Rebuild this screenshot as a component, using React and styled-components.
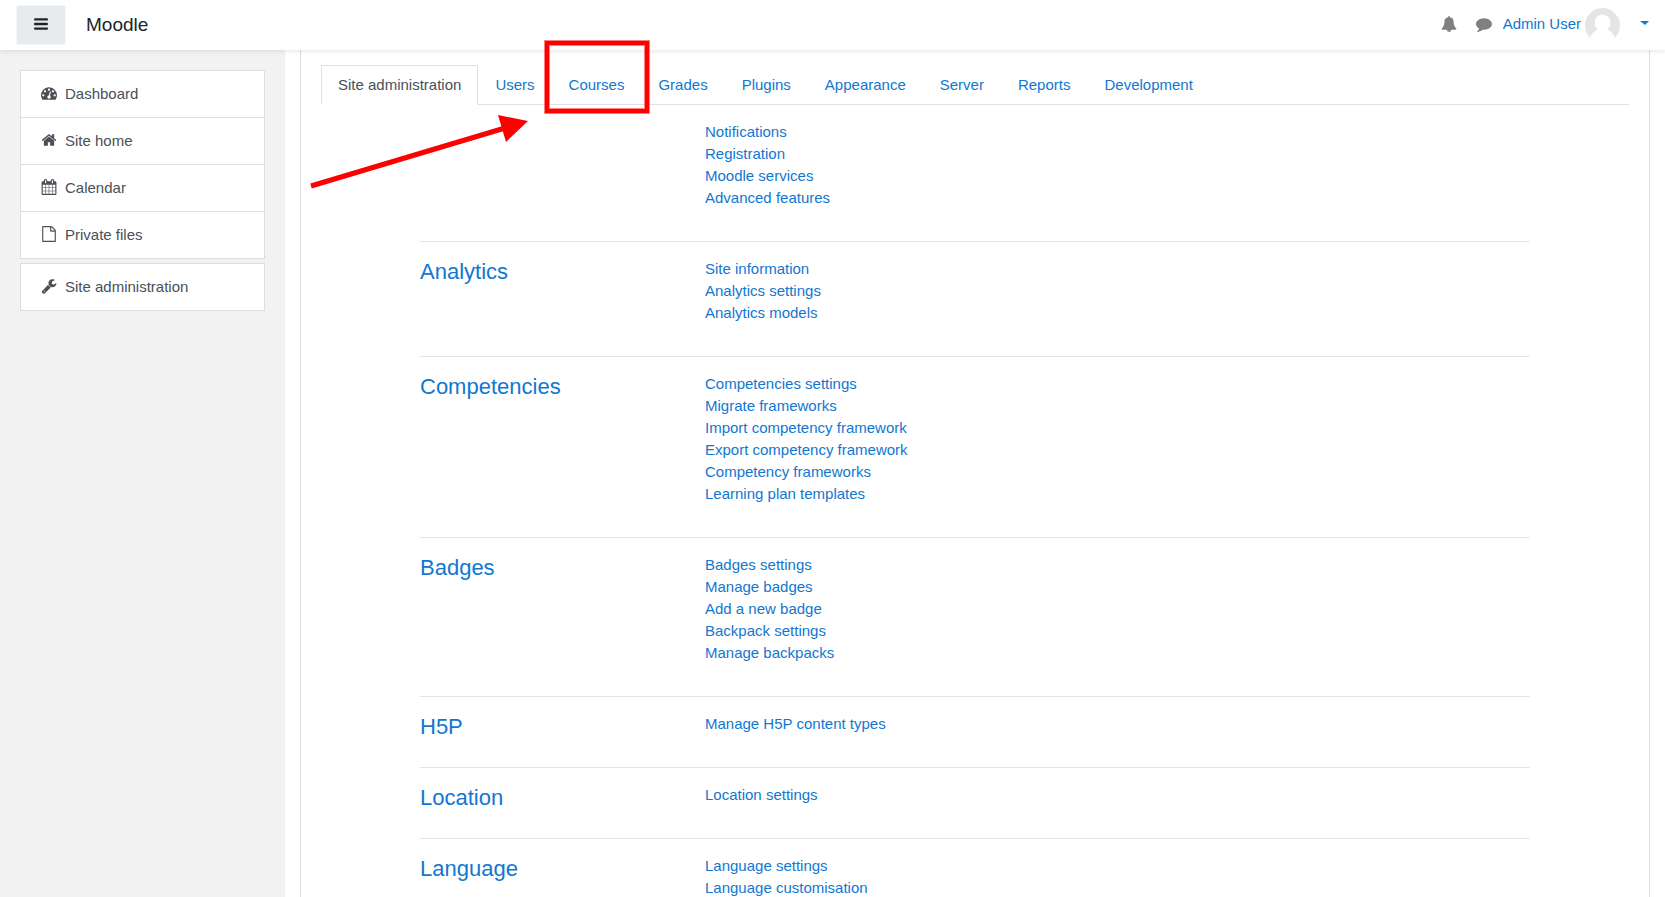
import React from 'react';
import styled, { createGlobalStyle, css } from 'styled-components';

const GlobalStyle = createGlobalStyle`
  *, *::before, *::after { box-sizing: border-box; }
  body {
    margin: 0;
    background: #fff;
    color: #212529;
    font-family: "Liberation Sans", Arial, sans-serif;
    font-size: 15px;
    line-height: 22px;
  }
  a { color: #1177d1; text-decoration: none; }
  ul { list-style: none; margin: 0; padding: 0; }
`;

/* Font Awesome 4 glyph outlines on a 1792 grid */
const icons = {
  bars: 'M1664 1344v128q0 26-19 45t-45 19h-1408q-26 0-45-19t-19-45v-128q0-26 19-45t45-19h1408q26 0 45 19t19 45zm0-512v128q0 26-19 45t-45 19h-1408q-26 0-45-19t-19-45v-128q0-26 19-45t45-19h1408q26 0 45 19t19 45zm0-512v128q0 26-19 45t-45 19h-1408q-26 0-45-19t-19-45v-128q0-26 19-45t45-19h1408q26 0 45 19t19 45z',
  home: 'M1472 992v480q0 26-19 45t-45 19h-384v-384h-256v384h-384q-26 0-45-19t-19-45v-480q0-1 .5-3t.5-3l575-474 575 474q1 2 1 6zm223-69l-62 74q-8 9-21 11h-3q-13 0-21-7l-692-577-692 577q-12 8-24 7-13-2-21-11l-62-74q-8-10-7-23.5t11-21.5l719-599q32-26 76-26t76 26l244 204v-195q0-14 9-23t23-9h192q14 0 23 9t9 23v408l219 182q10 8 11 21.5t-7 23.5z',
  dashboard: 'M384 1152q0-53-37.5-90.5t-90.5-37.5-90.5 37.5-37.5 90.5 37.5 90.5 90.5 37.5 90.5-37.5 37.5-90.5zm192-448q0-53-37.5-90.5t-90.5-37.5-90.5 37.5-37.5 90.5 37.5 90.5 90.5 37.5 90.5-37.5 37.5-90.5zm428 481l101-382q6-26-7.5-48.5t-38.5-29.5-48 6.5-30 39.5l-101 382q-60 5-107 43.5t-63 98.5q-20 77 20 146t117 89 146-20 89-117q16-60-6-117t-72-91zm660-33q0-53-37.5-90.5t-90.5-37.5-90.5 37.5-37.5 90.5 37.5 90.5 90.5 37.5 90.5-37.5 37.5-90.5zm-640-640q0-53-37.5-90.5t-90.5-37.5-90.5 37.5-37.5 90.5 37.5 90.5 90.5 37.5 90.5-37.5 37.5-90.5zm448 192q0-53-37.5-90.5t-90.5-37.5-90.5 37.5-37.5 90.5 37.5 90.5 90.5 37.5 90.5-37.5 37.5-90.5zm320 448q0 261-141 483-19 29-54 29h-1402q-35 0-54-29-141-221-141-483 0-182 71-348t191-286 286-191 348-71 348 71 286 191 191 286 71 348z',
  calendar: 'M192 1664h288v-288h-288v288zm352 0h320v-288h-320v288zm-352-352h288v-320h-288v320zm352 0h320v-320h-320v320zm-352-384h288v-288h-288v288zm736 736h320v-288h-320v288zm-384-736h320v-288h-320v288zm768 736h288v-288h-288v288zm-384-352h320v-320h-320v320zm-352-864v-288q0-13-9.500-22.500t-22.500-9.500h-64q-13 0-22.500 9.500t-9.500 22.500v288q0 13 9.500 22.500t22.500 9.500h64q13 0 22.500-9.500t9.500-22.500zm736 864h288v-320h-288v320zm-384-384h320v-288h-320v288zm384 0h288v-288h-288v288zm32-480v-288q0-13-9.500-22.500t-22.500-9.500h-64q-13 0-22.500 9.500t-9.500 22.500v288q0 13 9.500 22.500t22.500 9.500h64q13 0 22.500-9.500t9.500-22.500zm384-64v1280q0 52-38 90t-90 38h-1408q-52 0-90-38t-38-90v-1280q0-52 38-90t90-38h128v-96q0-66 47-113t113-47h64q66 0 113 47t47 113v96h384v-96q0-66 47-113t113-47h64q66 0 113 47t47 113v96h128q52 0 90 38t38 90z',
  file: 'M1596 380q28 28 48 76t20 88v1152q0 40-28 68t-68 28h-1344q-40 0-68-28t-28-68v-1600q0-40 28-68t68-28h896q40 0 88 20t76 48zm-444-244v376h376q-10-29-22-41l-313-313q-12-12-41-22zm384 1528v-1024h-416q-40 0-68-28t-28-68v-416h-768v1536h1280z',
  wrench: 'M448 1472q0-26-19-45t-45-19-45 19-19 45 19 45 45 19 45-19 19-45zm644-420l-682 682q-37 37-90 37-52 0-91-37l-106-108q-38-36-38-90 0-53 38-91l681-681q39 98 114.500 173.500t173.500 114.500zm634-435q0 39-23 106-47 134-164.500 217.500t-258.500 83.500q-185 0-316.500-131.500t-131.500-316.500 131.500-316.500 316.500-131.500q58 0 121.500 16.500t107.500 46.500q16 11 16 28t-16 28l-293 169v224l193 107q5-3 79-48.500t135.500-81 70.500-35.500q15 0 23.500 10t8.500 25z',
  bell: 'M912 1696q0-16-16-16-59 0-101.500-42.500t-42.500-101.500q0-16-16-16t-16 16q0 73 51.500 124.500t124.500 51.500q16 0 16-16zm816-288q0 52-38 90t-90 38h-448q0 106-75 181t-181 75-181-75-75-181h-448q-52 0-90-38t-38-90q50-42 91-88t85-119.500 74.500-158.500 50-206 19.500-260q0-152 117-282.500t307-158.500q-8-19-8-39 0-40 28-68t68-28 68 28 28 68q0 20-8 39 190 28 307 158.500t117 282.500q0 139 19.500 260t50 206 74.500 158.500 85 119.500 91 88z',
  comment: 'M1792 896q0 174-120 321.500t-326 233-450 85.500q-70 0-145-8-198 175-460 242-49 14-114 22-17 2-30.500-9t-17.500-29v-1q-3-4-.5-12t2-10 4.500-9.500l6-9 7-8.500 8-9q7-8 31-34.500t34.500-38 31-39.500 32.500-51 27-59 26-76q-157-89-247.500-220t-90.500-281q0-130 71-248.500t191-204.500 286-136.500 348-50.500q244 0 450 85.500t326 233 120 321.500z',
};

const IconSvg = styled.svg`
  display: block;
  flex: none;
  width: 16px;
  height: 16px;
  margin-bottom: 2px;
  fill: currentColor;
`;

const Icon = ({ name }) => (
  <IconSvg viewBox="0 0 1792 1792" aria-hidden="true">
    <path d={icons[name]} />
  </IconSvg>
);

const Page = styled.div`
  display: flex;
  flex-direction: column;
  height: 100vh;
  overflow: hidden;
`;

const Navbar = styled.header`
  position: relative;
  z-index: 1;
  flex: none;
  display: flex;
  align-items: center;
  height: 50px;
  padding: 0 16px;
  background: #fff;
  box-shadow: 0 2px 4px rgba(0, 0, 0, 0.08);
`;

const DrawerToggle = styled.button`
  display: flex;
  align-items: center;
  justify-content: center;
  width: 50px;
  height: 40px;
  padding: 0;
  border: 1px solid #f5f8fa;
  background: #e7ebee;
  color: #212529;
`;

const Brand = styled.a`
  margin-left: 20px;
  font-size: 19px;
  color: #212529;
`;

const NavTools = styled.div`
  display: flex;
  align-items: center;
  margin-left: auto;
`;

const NavIconButton = styled.button`
  display: flex;
  margin: 0 19px 0 0;
  padding: 0;
  border: 0;
  background: none;
  color: #808080;
`;

const UserMenu = styled.button`
  display: flex;
  align-items: center;
  gap: 4px;
  margin-left: -8px;
  padding: 0;
  border: 0;
  background: none;
  font: inherit;
  color: #1177d1;
`;

const UserName = styled.span`
  padding-bottom: 2px;
`;

const Avatar = styled.svg`
  display: block;
  width: 35px;
  height: 35px;
`;

const Caret = styled.span`
  margin: 0 0 4px 16px;
  border-top: 4px solid currentColor;
  border-left: 5px solid transparent;
  border-right: 4px solid transparent;
`;

const Body = styled.div`
  flex: 1;
  display: flex;
  min-height: 0;
`;

const Drawer = styled.nav`
  flex: none;
  display: flex;
  flex-direction: column;
  gap: 4px;
  width: 285px;
  padding: 20px;
  background: #f2f2f2;
`;

const DrawerGroup = styled.ul`
  width: 245px;
  border: 1px solid #dddddf;
  background: #fff;
`;

const DrawerItem = styled.li`
  & + & { border-top: 1px solid #dddddf; }
`;

const DrawerLink = styled.a`
  display: flex;
  align-items: center;
  gap: 8px;
  height: 46px;
  padding: 0 20px;
  color: #495057;
`;

const Main = styled.main`
  position: relative;
  flex: 1;
  display: flex;
  min-width: 0;
  padding: 0 15px;
`;

const Card = styled.div`
  flex: 1;
  min-width: 0;
  padding: 15px 20px;
  border: solid #dddddf;
  border-width: 0 1px;
`;

const Tabs = styled.ul`
  display: flex;
  border-bottom: 1px solid #dee2e6;
`;

const Tab = styled.li`
  position: relative;
  margin-bottom: -1px;
`;

const TabLink = styled.a`
  display: block;
  padding: 8px 16px;
  border: 1px solid transparent;
  ${({ $active }) => $active && css`
    border-color: #dee2e6 #dee2e6 #fff;
    background: #fff;
    color: #495057;
  `}
`;

const Highlight = styled.span`
  position: absolute;
  z-index: 2;
  top: -24px;
  left: -7px;
  right: -8px;
  bottom: -8px;
  border: 4px solid #f00;
  box-shadow: 0 0 0 1px rgba(255, 0, 0, 0.5), inset 0 0 0 1px rgba(255, 0, 0, 0.5);
  pointer-events: none;
`;

const Arrow = styled.svg`
  position: absolute;
  top: 60px;
  left: 20px;
  width: 230px;
  height: 84px;
  pointer-events: none;
`;

const Sections = styled.div`
  max-width: 1110px;
  margin: 0 auto;
`;

const Section = styled.section`
  display: grid;
  grid-template-columns: 285px 1fr;
  padding: 16px 0 24px;
  & + & { border-top: 1px solid #e4e4e5; }
`;

const SectionTitle = styled.h4`
  margin: 0;
  font-size: 22px;
  font-weight: 400;
  line-height: 27px;
`;

const SectionLinks = styled.ul`
  grid-column: 2;
  padding-bottom: 8px;
`;

const drawerGroups = [
  [
    ['dashboard', 'Dashboard'],
    ['home', 'Site home'],
    ['calendar', 'Calendar'],
    ['file', 'Private files'],
  ],
  [['wrench', 'Site administration']],
];

const tabs = [
  'Site administration', 'Users', 'Courses', 'Grades', 'Plugins',
  'Appearance', 'Server', 'Reports', 'Development',
];

const sections = [
  { links: ['Notifications', 'Registration', 'Moodle services', 'Advanced features'] },
  { title: 'Analytics', links: ['Site information', 'Analytics settings', 'Analytics models'] },
  {
    title: 'Competencies',
    links: [
      'Competencies settings', 'Migrate frameworks', 'Import competency framework',
      'Export competency framework', 'Competency frameworks', 'Learning plan templates',
    ],
  },
  {
    title: 'Badges',
    links: ['Badges settings', 'Manage badges', 'Add a new badge', 'Backpack settings', 'Manage backpacks'],
  },
  { title: 'H5P', links: ['Manage H5P content types'] },
  { title: 'Location', links: ['Location settings'] },
  { title: 'Language', links: ['Language settings', 'Language customisation'] },
];

export default function App() {
  return (
    <Page>
      <GlobalStyle />
      <Navbar>
        <DrawerToggle type="button" aria-label="Side panel">
          <Icon name="bars" />
        </DrawerToggle>
        <Brand href="#">Moodle</Brand>
        <NavTools>
          <NavIconButton type="button" aria-label="Notifications">
            <Icon name="bell" />
          </NavIconButton>
          <NavIconButton type="button" aria-label="Messages">
            <Icon name="comment" />
          </NavIconButton>
          <UserMenu type="button">
            <UserName>Admin User</UserName>
            <Avatar viewBox="0 0 35 35" aria-hidden="true">
              <defs>
                <clipPath id="avatar-clip"><circle cx="17.5" cy="17.5" r="17.5" /></clipPath>
              </defs>
              <g clipPath="url(#avatar-clip)">
                <rect width="35" height="35" fill="#e5e5e5" />
                <path
                  fill="#fff"
                  d="M17.500 6.500c4.600 0 7.800 3.600 7.800 8.200 0 2.800-1.100 5.200-3 6.800 3.800 1.600 6.800 4.700 8 9.500V35H4.700v-4c1.200-4.800 4.200-7.900 8-9.500-1.900-1.600-3-4-3-6.800 0-4.600 3.200-8.200 7.800-8.200z"
                />
              </g>
            </Avatar>
            <Caret />
          </UserMenu>
        </NavTools>
      </Navbar>
      <Body>
        <Drawer aria-label="Site">
          {drawerGroups.map((items, i) => (
            <DrawerGroup key={i}>
              {items.map(([icon, label]) => (
                <DrawerItem key={label}>
                  <DrawerLink href="#">
                    <Icon name={icon} />
                    {label}
                  </DrawerLink>
                </DrawerItem>
              ))}
            </DrawerGroup>
          ))}
        </Drawer>
        <Main>
          <Card>
            <Tabs>
              {tabs.map((label, i) => (
                <Tab key={label}>
                  <TabLink href="#" $active={i === 0}>{label}</TabLink>
                  {label === 'Courses' && <Highlight />}
                </Tab>
              ))}
            </Tabs>
            <Sections>
              {sections.map(({ title, links }) => (
                <Section key={links[0]}>
                  {title && <SectionTitle><a href="#">{title}</a></SectionTitle>}
                  <SectionLinks>
                    {links.map((label) => (
                      <li key={label}><a href="#">{label}</a></li>
                    ))}
                  </SectionLinks>
                </Section>
              ))}
            </Sections>
          </Card>
          <Arrow viewBox="0 0 230 84" aria-hidden="true">
            <path d="M6 76L200 18" stroke="#f00" strokeWidth="5" />
            <path d="M193 5L223 11L201 32z" fill="#f00" />
          </Arrow>
        </Main>
      </Body>
    </Page>
  );
}
